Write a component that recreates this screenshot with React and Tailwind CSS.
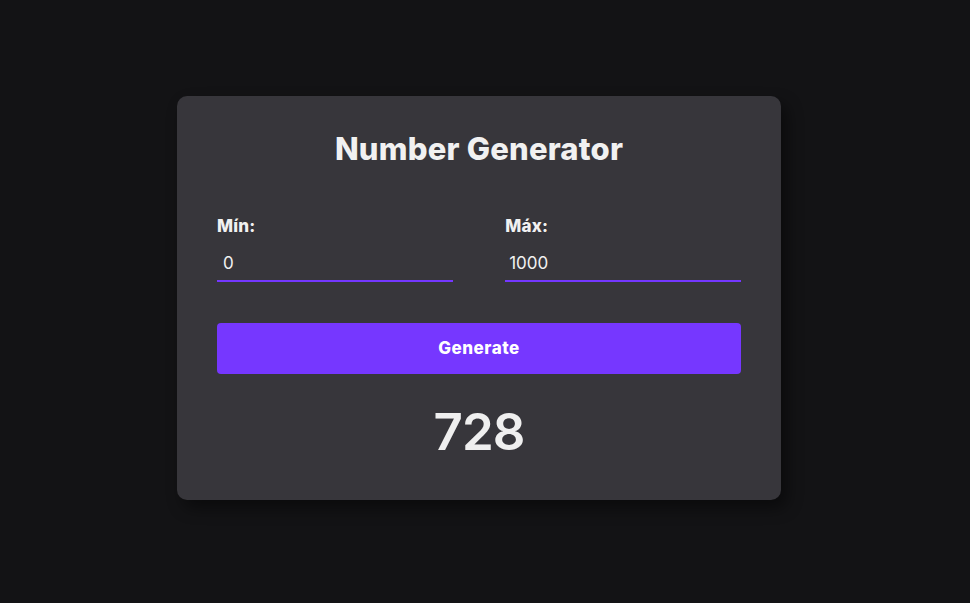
import React, { useState } from "react";

const font = { fontFamily: "Inter, 'Noto Sans', sans-serif" };

export default function App() {
  const [min, setMin] = useState("0");
  const [max, setMax] = useState("1000");
  const [result, setResult] = useState(728);

  const generate = () => {
    const lo = Number(min);
    const hi = Number(max);
    setResult(Math.floor(Math.random() * (hi - lo + 1)) + lo);
  };

  return (
    <div
      className="min-h-screen bg-[#131315] flex items-center justify-center pr-3 pb-[7px]"
      style={font}
    >
      {/* Card */}
      <div className="w-[604px] h-[404px] bg-[#37363b] rounded-[10px] shadow-[6px_8px_16px_rgba(0,0,0,0.45)] px-10 pt-[35px] pb-9 flex flex-col">
        <h1 className="h-[36px] leading-[36px] text-center text-[31px] font-extrabold text-[#f1f1f1] tracking-[0.2px]">
          Number Generator
        </h1>

        {/* Range inputs */}
        <div className="mt-[49px] flex justify-between">
          <div className="w-[45%] flex flex-col">
            <label className="h-[20px] leading-[20px] text-[17px] font-extrabold text-[#f1f1f1] tracking-[0.2px]">
              Mín:
            </label>
            <input
              type="number"
              value={min}
              onChange={(e) => setMin(e.target.value)}
              className="mt-[6px] h-[40px] pt-1 pl-[6px] bg-transparent border-b-2 border-[#7437ff] text-[17px] text-[#f1f1f1] outline-none [appearance:textfield]"
            />
          </div>
          <div className="w-[45%] flex flex-col">
            <label className="h-[20px] leading-[20px] text-[17px] font-extrabold text-[#f1f1f1] tracking-[0.2px]">
              Máx:
            </label>
            <input
              type="number"
              value={max}
              onChange={(e) => setMax(e.target.value)}
              className="mt-[6px] h-[40px] pt-1 pl-[4px] bg-transparent border-b-2 border-[#7437ff] text-[17px] text-[#f1f1f1] outline-none [appearance:textfield]"
            />
          </div>
        </div>

        <button
          onClick={generate}
          className="mt-[41px] h-[51px] w-full rounded-[4px] bg-[#7637ff] text-white text-[17px] font-extrabold tracking-[0.5px]"
        >
          Generate
        </button>

        <div className="mt-[26px] h-[64px] leading-[64px] text-center text-[51px] font-semibold text-[#efefef] tracking-[-1px]">
          {result}
        </div>
      </div>
    </div>
  );
}
